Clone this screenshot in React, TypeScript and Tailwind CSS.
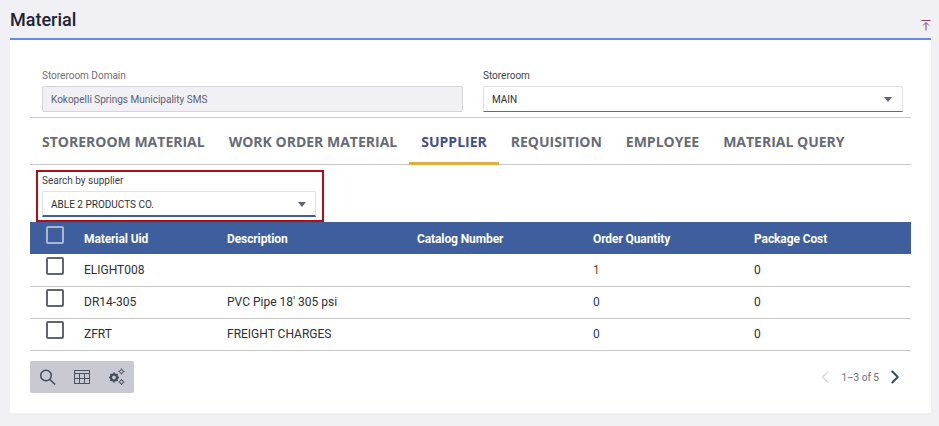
import React from "react";
import { ChevronLeft, ChevronRight, Search } from "lucide-react";

const tabs = [
  { label: "STOREROOM MATERIAL", active: false },
  { label: "WORK ORDER MATERIAL", active: false },
  { label: "SUPPLIER", active: true },
  { label: "REQUISITION", active: false },
  { label: "EMPLOYEE", active: false },
  { label: "MATERIAL QUERY", active: false },
];

const rows = [
  { uid: "ELIGHT008", description: "", catalog: "", qty: "1", qtyColor: "text-[#7a4a20]", cost: "0" },
  { uid: "DR14-305", description: "PVC Pipe 18' 305 psi", catalog: "", qty: "0", qtyColor: "text-[#27348b]", cost: "0" },
  { uid: "ZFRT", description: "FREIGHT CHARGES", catalog: "", qty: "0", qtyColor: "text-[#27348b]", cost: "0" },
];

const gridCols = "grid grid-cols-[54px_143px_190px_176px_161px_1fr] items-center";

const Caret = () => (
  <span className="w-0 h-0 border-l-[4px] border-r-[4px] border-t-[5px] border-l-transparent border-r-transparent border-t-[#5f6672]" />
);

const GearsIcon = () => (
  <svg width="18" height="18" viewBox="0 0 18 18" fill="none" stroke="#3f4a5a">
    <circle cx="6" cy="9.5" r="3" strokeWidth="2.2" />
    <path d="M6 4.5v1.5M6 13v1.5M1 9.5h1.5M9.5 9.5H11M2.5 6l1 1M8.5 12l1 1M9.5 6l-1 1M3.5 12l-1 1" strokeWidth="1.6" />
    <circle cx="13.5" cy="3.5" r="1.8" strokeWidth="1" />
    <path d="M13.5 .5v1M13.5 5.5v1M10.5 3.5h1M15.5 3.5h1" strokeWidth="1" />
    <circle cx="13.5" cy="14" r="1.8" strokeWidth="1" />
    <path d="M13.5 11v1M13.5 16v1M10.5 14h1M15.5 14h1" strokeWidth="1" />
  </svg>
);

const TableIcon = () => (
  <svg width="16" height="14" viewBox="0 0 16 14" fill="none" stroke="#4a5260" strokeWidth="1">
    <rect x="0.5" y="0.5" width="15" height="13" />
    <path d="M0.5 3.5h15M0.5 8.5h15M5.5 3.5v10M10.5 3.5v10" />
  </svg>
);

const SearchGlass = () => (
  <svg width="18" height="18" viewBox="0 0 18 18" fill="none" stroke="#3f4a5a">
    <circle cx="8" cy="7.5" r="5.3" strokeWidth="1.5" />
    <path d="M11.8 11.5L17.2 16.5" strokeWidth="1.5" />
  </svg>
);

const CollapseIcon = () => (
  <svg width="10" height="11" viewBox="0 0 10 11" fill="none" strokeWidth="1">
    <path d="M0.5 0.5h9" stroke="#a0405a" />
    <path d="M5 10.5V3M2 5.5L5 2.5l3 3" stroke="#6b4a9a" />
  </svg>
);

export default function App() {
  return (
    <div className="w-[939px] h-[426px] overflow-hidden bg-[#f0f0f5] font-['Roboto',sans-serif] px-[8px]">
      {/* Header */}
      <div className="ml-[2px] h-[40px] w-[921px] border-b-2 border-[#5f8eea] flex items-end justify-between">
        <h1 className="mb-[6px] text-[18px] leading-[24px] font-medium text-[#1f2430]">Material</h1>
        <div className="mb-[7px] flex">
          <CollapseIcon />
        </div>
      </div>

      {/* Card */}
      <div className="ml-[2px] w-[921px] h-[373px] bg-white px-[20px]">
        <div className="flex pl-[12px] pt-[29px] pb-[5px] gap-[20px]">
          <div className="w-[421px]">
            <div className="text-[10px] leading-[13px] mb-[4px] text-[#6b7078]">Storeroom Domain</div>
            <div className="h-[26px] flex items-center px-[8px] pt-[1px] bg-[#f0f0f5] border border-[#d4d4da] rounded-[2px] text-[10px] text-[#5b6070]">
              Kokopelli Springs Municipality SMS
            </div>
          </div>
          <div className="w-[420px]">
            <div className="text-[10px] leading-[13px] mb-[4px] text-[#3a3f48]">Storeroom</div>
            <div className="h-[26px] flex items-center justify-between pl-[8px] pr-[10px] pt-[1px] bg-white border border-[#e2e2e6] border-b-[#6b6b6b] rounded-t-[2px] text-[10px] text-[#2b2f38]">
              <span>MAIN</span>
              <Caret />
            </div>
          </div>
        </div>

        {/* Tabs */}
        <div className="flex h-[48px] border-y border-[#c9c9c9] font-['Open_Sans',sans-serif]">
          {tabs.map((tab) => (
            <div
              key={tab.label}
              className={`px-[12px] pt-[3px] flex items-center whitespace-nowrap text-[14px] font-bold border-b-[3px] -mb-[1px] ${
                tab.active ? "text-[#3f4f8f] border-[#dfae3f]" : "text-[#666b75] border-transparent"
              }`}
            >
              {tab.label}
            </div>
          ))}
        </div>

        {/* Supplier filter */}
        <div className="ml-[6px] mt-[5px] w-[288px] h-[52px] border-2 border-[#b00f14] pl-[4px] pr-[6px] pt-[2px]">
          <div className="text-[10px] leading-[14px] mb-[3px] text-[#3a3f48]">Search by supplier</div>
          <div className="h-[26px] flex items-center justify-between pl-[8px] pr-[9px] pt-[1px] bg-white border border-[#e2e2e6] border-b-2 border-b-[#3f5e9e] rounded-t-[2px] text-[10px] text-[#2b2f38]">
            <span>ABLE 2 PRODUCTS CO.</span>
            <Caret />
          </div>
        </div>

        {/* Table */}
        <div className={`${gridCols} h-[32px] pt-[1px] bg-[#3f5e9e] text-white text-[12px] font-bold tracking-[-0.1px]`}>
          <div className="pl-[16px]">
            <div className="w-[18px] h-[18px] border-2 border-[#a9b7d2] rounded-[2px] -mt-[7px]" />
          </div>
          <div>Material Uid</div>
          <div>Description</div>
          <div>Catalog Number</div>
          <div>Order Quantity</div>
          <div>Package Cost</div>
        </div>
        <div className="pt-[1px]">
          {rows.map((row) => (
            <div key={row.uid} className={`${gridCols} h-[32px] pb-[2px] border-b border-[#c9c9c9] text-[12px] text-[#2b2f38]`}>
              <div className="pl-[16px]">
                <div className="w-[18px] h-[18px] border-2 border-[#63666e] rounded-[2px] -mt-[7px]" />
              </div>
              <div>{row.uid}</div>
              <div>{row.description}</div>
              <div>{row.catalog}</div>
              <div className={row.qtyColor}>{row.qty}</div>
              <div>{row.cost}</div>
            </div>
          ))}
        </div>

        {/* Footer */}
        <div className="mt-[10px] flex items-center justify-between">
          <div className="w-[104px] h-[32px] bg-[#c9c9d3] rounded-[2px] flex items-center pl-[8px] gap-[18px]">
            <SearchGlass />
            <TableIcon />
            <GearsIcon />
          </div>
          <div className="flex items-center pr-[5px] text-[10px] text-[#6b7080]">
            <ChevronLeft size={20} strokeWidth={2} className="text-[#dcdce0] mr-[6px]" />
            <span>1–3 of 5</span>
            <ChevronRight size={22} strokeWidth={2.2} className="text-[#3f4a5a] ml-[5px]" />
          </div>
        </div>
      </div>
    </div>
  );
}
